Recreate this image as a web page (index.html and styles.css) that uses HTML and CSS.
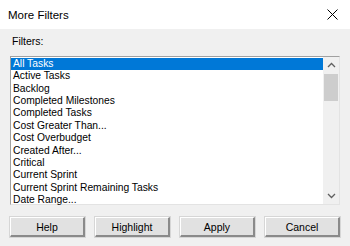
FILE: index.html
```html
<!DOCTYPE html>
<html lang="en">
<head>
<meta charset="UTF-8">
<title>More Filters</title>
<link rel="stylesheet" href="styles.css">
</head>
<body>
    <div class="dialog">
        <div class="titlebar">
            <span class="title">More Filters</span>
            <svg class="close" width="11" height="11" viewBox="0 0 11 11">
                <path d="M0.5 0.5 L10.5 10.5 M10.5 0.5 L0.5 10.5" stroke="#000" stroke-width="1" fill="none"/>
            </svg>
        </div>

        <div class="body">
            <div class="label">Filters:</div>

            <div class="listbox">
                <ul class="items">
                    <li class="selected">All Tasks</li>
                    <li>Active Tasks</li>
                    <li>Backlog</li>
                    <li>Completed Milestones</li>
                    <li>Completed Tasks</li>
                    <li>Cost Greater Than...</li>
                    <li>Cost Overbudget</li>
                    <li>Created After...</li>
                    <li>Critical</li>
                    <li>Current Sprint</li>
                    <li>Current Sprint Remaining Tasks</li>
                    <li>Date Range...</li>
                </ul>
                <div class="scrollbar">
                    <div class="arrow">
                        <svg width="9" height="6" viewBox="0 0 9 6"><path d="M1 5 L4.5 1.5 L8 5" stroke="#606060" stroke-width="1.3" fill="none"/></svg>
                    </div>
                    <div class="track"><div class="thumb"></div></div>
                    <div class="arrow">
                        <svg width="9" height="6" viewBox="0 0 9 6"><path d="M1 1 L4.5 4.5 L8 1" stroke="#606060" stroke-width="1.3" fill="none"/></svg>
                    </div>
                </div>
            </div>

            <div class="buttons">
                <button>Help</button>
                <button>Highlight</button>
                <button>Apply</button>
                <button>Cancel</button>
            </div>
        </div>
    </div>
</body>
</html>
```

FILE: styles.css
```css
/* Dialog frame */
body {
    margin: 0;
    padding: 0;
    font-family: "Liberation Sans", Arial, sans-serif;
    background-color: #f0f0f0;
}
.dialog {
    width: 350px;
    height: 246px;
    background-color: #f0f0f0;
    overflow: hidden;
}
.titlebar {
    height: 29px;
    background-color: #fff;
    display: flex;
    align-items: center;
    justify-content: space-between;
    padding: 0 12px 0 8px;
}
.title {
    font-size: 11.5px;
    color: #000;
}
.body {
    padding: 0 10px;
}
.label {
    font-size: 10.5px;
    color: #000;
    padding: 6px 0 0 2px;
    height: 21px;
}

/* List box */
.listbox {
    height: 147px;
    display: flex;
    background-color: #fff;
    border-top: 1px solid #a0a0a0;
    border-left: 1px solid #a0a0a0;
    border-right: 1px solid #e3e3e3;
    border-bottom: 1px solid #e3e3e3;
}
.items {
    list-style: none;
    margin: 0;
    padding: 1px 0 0 0;
    flex: 1;
}
.items li {
    font-size: 10.3px;
    line-height: 12.36px;
    height: 12.36px;
    padding-left: 2px;
    color: #000;
    white-space: nowrap;
}
.items li.selected {
    background-color: #0078d7;
    color: #fff;
}
.scrollbar {
    width: 16px;
    background-color: #f0f0f0;
    display: flex;
    flex-direction: column;
}
.arrow {
    height: 16px;
    display: flex;
    align-items: center;
    justify-content: center;
}
.track {
    flex: 1;
    padding: 1px 1px 0 1px;
}
.thumb {
    height: 27px;
    background-color: #cdcdcd;
}

/* Buttons */
.buttons {
    display: flex;
    gap: 10px;
    margin-top: 12px;
}
button {
    width: 76px;
    height: 20px;
    padding: 0;
    font-family: "Liberation Sans", Arial, sans-serif;
    font-size: 10.5px;
    color: #000;
    background-color: #e1e1e1;
    border-top: 1px solid #fff;
    border-left: 1px solid #fff;
    border-right: 2px solid #8a8a8a;
    border-bottom: 2px solid #8a8a8a;
    box-shadow: 0 0 0 1px #d6d6d6;
}
```
